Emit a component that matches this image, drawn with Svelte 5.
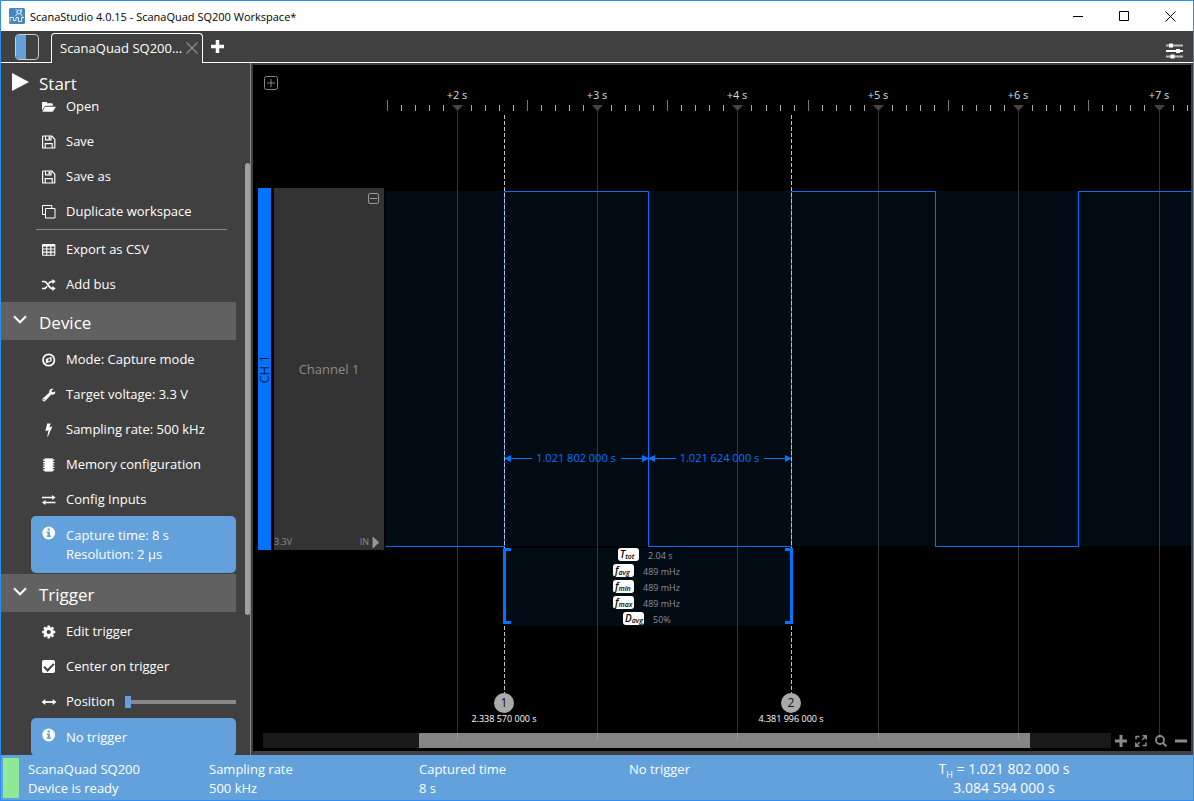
<script>
  let width = $state(806);
  let centered = $state(true);
  let position = $state(0);

  // Time axis: x = 72 is +2 s, one second spans 140.35 px.
  const scale = 140.35;
  const toX = (t) => Math.floor(72.25 + (t - 2) * scale);

  let ticks = $derived(
    Array.from({ length: Math.max(0, Math.ceil((width - 6) / (scale / 10))) }, (_, i) => {
      const n = i + 15;
      return { x: toX(n / 10), major: n % 10 === 0, mid: n % 10 === 5, label: `+${n / 10} s` };
    }).filter((t) => t.x < width - 2)
  );

  const edges = [2.33857, 3.360372, 4.381996, 5.405, 6.425].map(toX);
  const high = 126;
  const low = 481;
  let wave = $derived.by(() => {
    let d = `M1 ${low + 0.5}`;
    edges.forEach((x, i) => {
      const up = i % 2 === 0;
      d += `H${x + 0.5}V${(up ? high : low) + 0.5}`;
    });
    return d + `H${width}`;
  });

  const cursors = [
    { n: 1, x: edges[0], time: '2.338 570 000 s' },
    { n: 2, x: edges[2], time: '4.381 996 000 s' }
  ];
  const spans = [
    { a: edges[0], b: edges[1], text: '1.021 802 000 s' },
    { a: edges[1], b: edges[2], text: '1.021 624 000 s' }
  ];
  const stats = [
    { s: 'T', sub: 'tot', v: '2.04 s', x: 233 },
    { s: 'f', sub: 'avg', v: '489 mHz', x: 228 },
    { s: 'f', sub: 'min', v: '489 mHz', x: 228 },
    { s: 'f', sub: 'max', v: '489 mHz', x: 228 },
    { s: 'D', sub: 'avg', v: '50%', x: 238 }
  ];

  const fileItems = [
    ['open', 'Open'],
    ['save', 'Save'],
    ['save', 'Save as'],
    ['copy', 'Duplicate workspace']
  ];
  const exportItems = [
    ['table', 'Export as CSV'],
    ['shuffle', 'Add bus']
  ];
  const deviceItems = [
    ['compass', 'Mode: Capture mode'],
    ['wrench', 'Target voltage: 3.3 V'],
    ['bolt', 'Sampling rate: 500 kHz'],
    ['chip', 'Memory configuration'],
    ['exchange', 'Config Inputs']
  ];
</script>

{#snippet icon(name)}
  <svg class="icon" viewBox="0 0 14 14" width="14" height="14" aria-hidden="true">
    {#if name === 'open'}
      <path d="M0 10.600V2.800q0-1 1-1h3.200q1 0 1 1v.5h4.600q1 0 1 1v1.500H4.200q-.9 0-1.500.8z" fill="#fff" />
      <path d="M3.600 6.800H13.900L11.300 11q-.4.8-1.200.8H.4l2.300-4.300q.3-.7.900-.7z" fill="#fff" />
    {:else if name === 'save'}
      <path d="M.6 1.600v10.800q0 .6.6.6h11q.6 0 .6-.6V4.200L9.900 1H1.200q-.6 0-.6.6z" fill="none" stroke="#fff" stroke-width="1.200" />
      <path d="M3.500 1v3.900h5.600V1M3.200 13V8.600h7V13" fill="none" stroke="#fff" stroke-width="1.100" />
      <path d="M6.500 1.500h1.700v2.600H6.500z" fill="#fff" />
    {:else if name === 'copy'}
      <path d="M3.500 3.500h9.500v9.500h-9.500z" fill="none" stroke="#fff" stroke-width="1" />
      <path d="M3.500 9.500h-3v-9h9.300v3" fill="none" stroke="#fff" stroke-width="1" />
    {:else if name === 'table'}
      <rect x="0" y="1" width="13.400" height="11.800" rx="1" fill="#fff" />
      <path d="M1.200 3.500h3v2h-3zM5.300 3.500h3v2h-3zM9.400 3.500h2.900v2H9.400zM1.200 6.600h3v2h-3zM5.300 6.600h3v2h-3zM9.400 6.600h2.900v2H9.400zM1.200 9.700h3v2h-3zM5.300 9.700h3v2h-3zM9.400 9.700h2.900v2H9.400z" fill="#404040" />
    {:else if name === 'shuffle'}
      <path d="M0 3.500h2.200c3.600 0 4.400 7 8 7H11M0 10.500h2.200c1.300 0 2.200-1 2.900-2.300M6.600 5.600C7.400 4.400 8.400 3.500 10 3.500h1" fill="none" stroke="#fff" stroke-width="1.700" />
      <path d="M10.300.9 13.700 3.500 10.300 6.100zM10.300 7.900 13.700 10.500 10.300 13.100z" fill="#fff" />
    {:else if name === 'compass'}
      <circle cx="6.700" cy="7" r="5.700" fill="none" stroke="#fff" stroke-width="1.700" />
      <path d="M9.600 3.800V8.200L3.800 10.500V6z" fill="#fff" />
      <path d="M6.400 6v2.400l1.800-.7V5.200z" fill="#404040" />
    {:else if name === 'wrench'}
      <path d="M13.100 3.300 11.200 4.500 9.700 3.700V2.200L11.600 1C9.200-.1 6.700 1.800 7.300 4.500L.8 10.400c-1.500 1.700.9 4 2.400 2.500L9.300 6.600c2.600.6 4.600-1.200 3.800-3.300zM2 12.400a.7.7 0 1 1 0-1.400.7.7 0 0 1 0 1.400z" fill="#fff" fill-rule="evenodd" />
    {:else if name === 'bolt'}
      <path d="M5.200.4h3.500L7.400 4.200l3-.7L5.900 13.600h-.7L6.600 7.300l-3.200.8z" fill="#fff" />
    {:else if name === 'chip'}
      <path d="M2.600.4h8.200v13.200H2.600z" fill="#fff" />
      <path d="M1 2.200h11.400M1 4.600h11.400M1 7h11.400M1 9.400h11.400M1 11.800h11.400" stroke="#fff" stroke-width="1.200" />
    {:else if name === 'exchange'}
      <path d="M0 4.500h11M2.500 9.500h11" stroke="#fff" stroke-width="1.500" />
      <path d="M10 1.900 13.600 4.500 10 7.100zM3.500 6.900 0 9.500l3.500 2.600z" fill="#fff" />
    {:else if name === 'info'}
      <circle cx="6.700" cy="7" r="6.400" fill="#fff" />
      <path d="M5.600 2.500h2.300v1.900H5.600zM4.700 5.400h3.200v4.100h.9v1.500H4.700V9.500h.9V6.900h-.9z" fill="#62a1dc" />
    {:else if name === 'cog'}
      <circle cx="6.700" cy="7" r="3.600" fill="none" stroke="#fff" stroke-width="3" />
      <g stroke="#fff" stroke-width="2.500">
        <path d="M6.700.5v2.200M6.700 11.300v2.200M.2 7h2.200M11 7h2.200M2.100 2.400l1.600 1.600M9.700 10l1.600 1.600M11.300 2.400 9.700 4M3.700 10l-1.600 1.600" />
      </g>
    {:else if name === 'arrows'}
      <path d="M2 7h10" stroke="#fff" stroke-width="1.700" />
      <path d="M3.300 4v6L-.4 7zM10.700 4v6L14.400 7z" fill="#fff" />
    {/if}
  </svg>
{/snippet}

{#snippet row(name, text)}
  <button class="row">{@render icon(name)}<span>{text}</span></button>
{/snippet}

{#snippet section(text)}
  <button class="section">
    <svg viewBox="0 0 14 9" width="14" height="9" aria-hidden="true"><path d="M1 1.300 7 7.300 13 1.300" fill="none" stroke="#fff" stroke-width="2" /></svg>
    <span>{text}</span>
  </button>
{/snippet}

<div class="window">
  <header class="titlebar">
    <svg viewBox="0 0 16 16" width="16" height="16" aria-hidden="true">
      <rect width="16" height="16" rx="1.500" fill="#4a86bd" />
      <path d="M1 13.500V9.500h3.500v3H7v-3h2.500v4h3v-4H15" fill="none" stroke="#dcebf8" stroke-width="1" />
      <circle cx="10" cy="4" r="2" fill="none" stroke="#dcebf8" stroke-width="1.200" />
      <path d="M6.500 1 8 2.500M8.500 5.500 6.500 8M11.500 5.500l2 3M12.500 1v2" fill="none" stroke="#dcebf8" stroke-width="1" />
    </svg>
    <span class="title">ScanaStudio 4.0.15 - ScanaQuad SQ200 Workspace*</span>
    <button aria-label="Minimize"><svg viewBox="0 0 11 11" width="11" height="11"><path d="M0 5.500h10" stroke="#000" /></svg></button>
    <button aria-label="Maximize"><svg viewBox="0 0 11 11" width="11" height="11"><path d="M.5.5h9v9h-9z" fill="none" stroke="#000" /></svg></button>
    <button aria-label="Close"><svg viewBox="0 0 11 11" width="11" height="11"><path d="M.5.5l10 10M10.500.5l-10 10" stroke="#000" /></svg></button>
  </header>

  <nav class="tabs">
    <div class="edge first">
      <button class="panel-toggle" aria-label="Toggle side panel"><i></i></button>
    </div>
    <div class="tab">
      <span>ScanaQuad SQ200...</span>
      <button aria-label="Close tab"><svg viewBox="0 0 12 12" width="12" height="12"><path d="M.5.5l11 11M11.500.5l-11 11" stroke="#8c8c8c" stroke-width="1.300" /></svg></button>
    </div>
    <div class="edge rest">
      <button aria-label="New tab"><svg viewBox="0 0 13 13" width="13" height="13"><path d="M6.500 0v13M0 6.500h13" stroke="#fff" stroke-width="3.500" /></svg></button>
      <button class="settings" aria-label="Settings">
        <svg viewBox="0 0 18 16" width="18" height="16">
          <path d="M0 2.500h17M0 13.500h17" stroke="#bbb" stroke-width="2" />
          <path d="M0 8h17" stroke="#fff" stroke-width="2" />
          <path d="M3 .5h4v4H3zM10 6h4v4h-4zM4.500 11.500h4v4h-4z" fill="#fff" />
        </svg>
      </button>
    </div>
  </nav>

  <main>
    <aside>
      <button class="start">
        <svg viewBox="0 0 17 18" width="17" height="18" aria-hidden="true"><path d="M0 0 17 9 0 18z" fill="#fff" /></svg>
        <span>Start</span>
      </button>
      <div class="scroller">
        <div class="menu">
          {#each fileItems as [name, text]}{@render row(name, text)}{/each}
          <hr />
          {#each exportItems as [name, text]}{@render row(name, text)}{/each}
          {@render section('Device')}
          {#each deviceItems as [name, text]}{@render row(name, text)}{/each}
          <div class="info">{@render icon('info')}<p>Capture time: 8 s<br />Resolution: 2 µs</p></div>
          {@render section('Trigger')}
          {@render row('cog', 'Edit trigger')}
          <label class="row"><input type="checkbox" bind:checked={centered} /><span>Center on trigger</span></label>
          <label class="row">{@render icon('arrows')}<span>Position</span><input type="range" min="0" max="100" bind:value={position} /></label>
          <div class="info">{@render icon('info')}<p>No trigger</p></div>
        </div>
        <div class="track"><i></i></div>
      </div>
    </aside>

    <section class="plot">
      <div class="corner">
        <button aria-label="Expand all"><svg viewBox="0 0 14 14" width="14" height="14"><rect x=".5" y=".5" width="13" height="13" rx="2" fill="none" stroke="#888" /><path d="M7 3v8M3 7h8" stroke="#888" /></svg></button>
      </div>
      <div class="channel">
        <div class="strip"><span>CH 1</span></div>
        <div class="card">
          <button aria-label="Collapse channel"><svg viewBox="0 0 11 11" width="11" height="11"><rect x=".5" y=".5" width="10" height="10" rx="1.500" fill="none" stroke="#999" /><path d="M2 5.500h7" stroke="#999" /></svg></button>
          <h2>Channel 1</h2>
          <footer>
            <span>3.3V</span>
            <span class="in">IN <svg viewBox="0 0 7 11" width="7" height="11"><path d="M1 0v11M1 0 7 5.500 1 11z" fill="#999" stroke="#999" stroke-width=".5" /></svg></span>
          </footer>
        </div>
      </div>

      <div class="timeline" bind:clientWidth={width}>
        <svg width="100%" height="100%">
          <rect x="1" y={high} width={Math.max(0, width - 1)} height={low - high} fill="#000b14" />
          <rect x={edges[0]} y="483" width={edges[2] - edges[0]} height="78" fill="#000b14" />
          {#each ticks as t}
            {#if t.major}
              <rect x={t.x} y="44" width="1" height="630" fill="#fff" fill-opacity=".2" />
              <path d={`M${t.x - 5} 40h11l-5.500 6z`} fill="#444" />
              <text class="tick" x={t.x} y="34">{t.label}</text>
            {:else}
              <rect x={t.x} y={t.mid ? 35 : 40} width="1" height={t.mid ? 11 : 6} fill={t.mid ? '#777' : '#aaa'} />
            {/if}
          {/each}
          <path d={wave} fill="none" stroke="#0074ff" />
          {#each spans as s}
            <path d={`M${s.a + 2} 393.500H${s.a + 28}M${s.b - 27} 393.500H${s.b - 2}`} stroke="#0074ff" />
            <path d={`M${s.a} 393.500l7-3.500v7zM${s.b + 1} 393.500l-7-3.500v7z`} fill="#0074ff" />
            <text class="span" x={(s.a + s.b) / 2} y="397">{s.text}</text>
          {/each}
          <path d={`M${edges[0] + 7} 484.500h-6.500v73h6.500M${edges[2] - 6} 484.500h6.500v73h-6.500`} fill="none" stroke="#0074ff" stroke-width="3" />
          {#each cursors as c}
            <path d={`M${c.x + 0.5} 50V483M${c.x + 0.5} 561V628`} stroke="#c4c4c4" stroke-dasharray="4 2" />
            <circle cx={c.x} cy="638" r="10" fill="#aaa" />
            <text class="cursor" x={c.x} y="642">{c.n}</text>
            <text class="time" x={c.x} y="657">{c.time}</text>
          {/each}
          {#each stats as s, i}
            <rect x={s.x} y={483 + i * 16} width="21" height="13" rx="3" fill="#fff" />
            <text class="sym" x={s.x + 2} y={493 + i * 16}>{s.s}<tspan class="sub" dy="1">{s.sub}</tspan></text>
            <text class="stat" x={s.x + 30} y={494 + i * 16}>{s.v}</text>
          {/each}
        </svg>
      </div>

      <div class="bottom">
        <div class="hbar"><i></i></div>
        <button aria-label="Zoom in"><svg viewBox="0 0 12 12" width="12" height="12"><path d="M6 0v12M0 6h12" stroke="#8a8a8a" stroke-width="3" /></svg></button>
        <button aria-label="Zoom to fit"><svg viewBox="0 0 12 12" width="12" height="12"><path d="M7.500.8h3.700v3.700M4.500 11.200H.8V7.500M11 1 7.300 4.700M1 11l3.700-3.700M1 4.500V1.500h3.500M11 7.500v3H7.500" fill="none" stroke="#8a8a8a" stroke-width="1.500" /></svg></button>
        <button aria-label="Zoom to selection"><svg viewBox="0 0 12 12" width="12" height="12"><circle cx="5" cy="5" r="4" fill="none" stroke="#8a8a8a" stroke-width="1.800" /><path d="M8 8l3.400 3.400" stroke="#8a8a8a" stroke-width="2" /></svg></button>
        <button aria-label="Zoom out"><svg viewBox="0 0 12 12" width="12" height="12"><path d="M0 6h12" stroke="#8a8a8a" stroke-width="3" /></svg></button>
      </div>
    </section>
  </main>

  <footer class="status">
    <i class="led"></i>
    <p>ScanaQuad SQ200<br />Device is ready</p>
    <p>Sampling rate<br />500 kHz</p>
    <p>Captured time<br />8 s</p>
    <p>No trigger</p>
    <p class="measure">T<small>H</small> = 1.021 802 000 s<br />3.084 594 000 s</p>
  </footer>
</div>

<style>
  :global(body) { margin: 0; background: #404040; }
  * { box-sizing: border-box; }
  .window {
    display: flex;
    flex-direction: column;
    height: 100vh;
    border: 1px solid #2f8df0;
    background: #404040;
    color: #fff;
    font: 13px/19px "Open Sans", "Noto Sans", sans-serif;
  }
  button { display: flex; align-items: center; margin: 0; padding: 0; border: 0; background: none; color: inherit; font: inherit; }
  svg { display: block; flex: none; overflow: visible; }
  p, h2 { margin: 0; font-weight: 400; }

  .titlebar { display: flex; align-items: center; flex: none; height: 30px; padding-left: 8px; background: #fff; color: #000; font-size: 11px; }
  .title { flex: 1; margin-left: 5px; }
  .titlebar button { justify-content: center; width: 46px; height: 100%; }

  .tabs { display: flex; flex: none; height: 32px; }
  .edge { display: flex; align-items: center; border-bottom: 1px solid #fff; }
  .first { width: 50px; padding-left: 14px; }
  .panel-toggle { width: 24px; height: 26px; border: 1px solid #ccc; border-radius: 4px; overflow: hidden; }
  .panel-toggle i { width: 10px; height: 100%; background: #62a1dc; }
  .tab { display: flex; align-items: center; justify-content: space-between; width: 152px; margin-top: 2px; padding: 0 4px 1px 8px; border: 1px solid #fff; border-bottom: 0; border-radius: 4px 4px 0 0; white-space: nowrap; }
  .rest { flex: 1; justify-content: space-between; padding: 0 9px 0 8px; }
  .settings { align-self: flex-end; margin-bottom: 3px; }

  main { display: flex; flex: 1; min-height: 0; }
  aside { display: flex; flex-direction: column; width: 250px; flex: none; border-right: 1px solid #888; }
  .start { flex: none; gap: 10px; height: 39px; padding: 2px 0 0 11px; font-size: 17px; }
  .start svg { margin-bottom: 4px; }
  .scroller { display: flex; flex: 1; min-height: 0; overflow: hidden; }
  .menu { flex: 1; min-width: 0; margin-top: -13px; }
  .row { display: flex; align-items: center; gap: 10px; width: 100%; height: 35px; padding-left: 41px; text-align: left; white-space: nowrap; }
  hr { height: 1px; margin: 0 9px 2px 35px; border: 0; background: #888; }
  .section { width: 100%; height: 38px; gap: 12px; margin: 0 0 2px; padding: 2px 0 0 12px; background: #616161; font-size: 17px; }
  .section svg { margin-bottom: 6px; }
  .info { display: flex; gap: 10px; margin: -1px 0 1px 30px; padding: 10px 0 9px 11px; border-radius: 5px; background: #62a1dc; }
  .track { flex: none; width: 14px; padding: 61px 0 0 9px; }
  .track i { display: block; width: 5px; height: 77%; border-radius: 3px; background: #a0a0a0; }
  .scroller .track i { height: calc(100% - 140px); }
  input { margin: 0; appearance: none; }
  input[type="checkbox"] { display: block; width: 13px; height: 13px; margin-right: 1px; border-radius: 2px; background: #fff; }
  input[type="checkbox"]:checked::before { content: ""; display: block; width: 8px; height: 4px; margin: 3px 0 0 2px; border: solid #404040; border-width: 0 0 2px 2px; transform: rotate(-45deg); }
  input[type="range"] { flex: 1; min-width: 0; height: 12px; background: linear-gradient(#888, #888) center / 100% 4px no-repeat; }
  input[type="range"]::-webkit-slider-thumb { appearance: none; width: 6px; height: 12px; background: #62a1dc; }

  .plot {
    display: grid;
    grid-template-columns: 132px 1fr;
    grid-template-rows: 123px 362px 1fr;
    flex: 1;
    min-width: 0;
    margin: 2px 2px 4px;
    background: #000;
  }
  .corner { padding: 11px; }
  .channel { display: flex; gap: 3px; padding: 0 1px 0 5px; }
  .strip { display: flex; align-items: center; justify-content: center; width: 13px; background: #0074ff; color: #001a3c; }
  .strip span { writing-mode: vertical-rl; transform: rotate(180deg); line-height: 13px; }
  .card { display: flex; flex-direction: column; justify-content: space-between; flex: 1; background: #333; color: #8c8c8c; }
  .card button { align-self: flex-end; margin: 5px 5px 0 0; }
  h2 { font-size: 13px; text-align: center; }
  .card footer { display: flex; align-items: center; justify-content: space-between; padding-right: 5px; font-size: 9px; line-height: 16px; }
  .in { display: flex; align-items: center; gap: 3px; }
  .timeline { grid-row: 1 / -1; grid-column: 2; min-width: 0; overflow: hidden; z-index: 1; pointer-events: none; }
  text { font-family: "Open Sans", sans-serif; text-anchor: middle; }
  .tick { font-size: 11px; fill: #ddd; }
  .span { font-size: 11px; fill: #0074ff; }
  .cursor { font-size: 12px; fill: #101020; }
  .time { font-size: 9px; fill: #fff; }
  .sym { font-size: 10px; font-style: italic; font-weight: 600; fill: #000; text-anchor: start; }
  .sub { font-size: 7px; }
  .stat { font-size: 9px; fill: #8c9196; text-anchor: start; }
  .bottom { display: flex; align-items: center; align-self: end; grid-row: 3; grid-column: 1 / -1; gap: 8px; height: 15px; margin: 0 4px 3px 10px; }
  .hbar { flex: 1; height: 100%; margin-right: -4px; background: #1a1a1a; }
  .hbar i { display: block; width: 72%; height: 100%; margin-left: 18.4%; background: #858585; }

  .status { display: grid; grid-template-columns: 16px 181px 210px 210px 210px 1fr; flex: none; height: 45px; padding: 3px 24px 3px 2px; background: #62a1dc; }
  .status p { padding-top: 2px; margin-left: 9px; white-space: nowrap; }
  .led { background: #8fe996; }
  .status .measure { padding-top: 1px; font-size: 14px; text-align: center; }
  small { font-size: 9px; vertical-align: sub; line-height: 0; }
</style>
